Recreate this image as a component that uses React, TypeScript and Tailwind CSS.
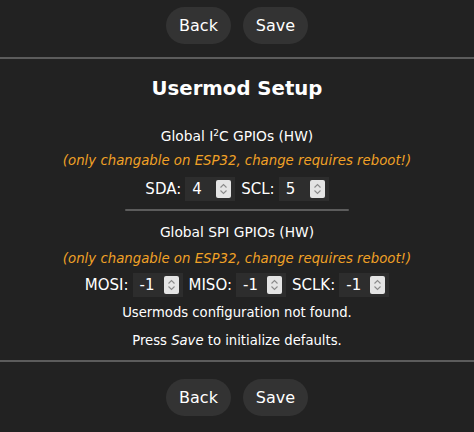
import type { ReactNode } from "react";

const font = { fontFamily: '"DejaVu Sans", Verdana, sans-serif' };

function Btn({ children }: { children: ReactNode }) {
  return (
    <button className="h-[37px] w-[65px] rounded-full bg-[#333] text-[16px] text-white">
      {children}
    </button>
  );
}

function Buttons() {
  return (
    <div className="flex justify-center gap-[12px]">
      <Btn>Back</Btn>
      <Btn>Save</Btn>
    </div>
  );
}

function Spinner() {
  return (
    <div className="flex h-[18px] w-[15px] items-center justify-center rounded-[2px] bg-[#e4e4e4]">
      <svg width="9" height="12" viewBox="0 0 9 12" fill="none" stroke="#8a8a8a" strokeWidth="1.1">
        <path d="M1.5 4.5 L4.5 1.5 L7.5 4.5" />
        <path d="M1.5 7.5 L4.5 10.5 L7.5 7.5" />
      </svg>
    </div>
  );
}

function NumInput({ value }: { value: string }) {
  return (
    <div className="flex h-[24px] w-[50px] items-center justify-between bg-[#2d2d2d] pl-[7px] pr-[4px] text-[15px]">
      <span>{value}</span>
      <Spinner />
    </div>
  );
}

function Field({ label, value }: { label: string; value: string }) {
  return (
    <div className="flex items-center gap-[4px]">
      <span className="text-[15px]">{label}</span>
      <NumInput value={value} />
    </div>
  );
}

function Warn({ className = "" }: { className?: string }) {
  return (
    <div className={`flex h-[26px] items-center justify-center pt-[2px] text-[13.3px] italic text-[#f0a126] ${className}`}>
      (only changable on ESP32, change requires reboot!)
    </div>
  );
}

export default function App() {
  return (
    <div className="min-h-screen bg-[#222] pt-[7px] text-center text-[13.2px] text-white" style={font}>
      <Buttons />
      <div className="mt-[13px] h-[2px] bg-[#5c5c5c]" />

      <h2 className="mt-[18px] h-[24px] text-[19.7px] font-bold leading-[24px]">Usermod Setup</h2>

      <div className="mt-[24px] flex h-[22px] items-center justify-center text-[13.8px]">
        <span>
          Global I<sup className="text-[9px]">2</sup>C GPIOs (HW)
        </span>
      </div>
      <Warn />
      <div className="flex h-[30px] items-center justify-center gap-[6px] pt-[2px]">
        <Field label="SDA:" value="4" />
        <Field label="SCL:" value="5" />
      </div>

      <div className="mx-auto mt-[6px] mb-[10px] h-[2px] w-[224px] rounded-full bg-[#5c5c5c]" />

      <div className="flex h-[22px] items-center justify-center text-[13.8px]">Global SPI GPIOs (HW)</div>
      <Warn className="mt-[2px]" />
      <div className="flex h-[28px] items-center justify-center gap-[6px]">
        <Field label="MOSI:" value="-1" />
        <Field label="MISO:" value="-1" />
        <Field label="SCLK:" value="-1" />
      </div>

      <div className="flex h-[28px] items-center justify-center">Usermods configuration not found.</div>
      <div className="flex h-[27px] items-center justify-center">
        <span>
          Press <i>Save</i> to initialize defaults.
        </span>
      </div>

      <div className="mt-[6px] h-[2px] bg-[#5c5c5c]" />
      <div className="pt-[17px] pb-[18px]">
        <Buttons />
      </div>
    </div>
  );
}
